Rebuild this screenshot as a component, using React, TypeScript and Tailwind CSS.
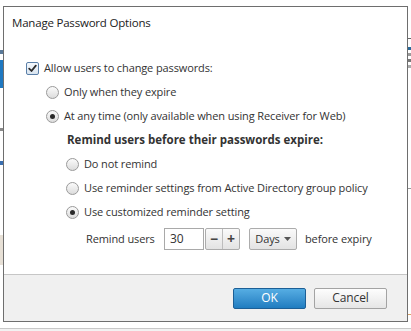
import React from 'react';

const font = { fontFamily: '"Open Sans", "Noto Sans", sans-serif' };

function CheckBox() {
  return (
    <span className="inline-flex h-[13px] w-[13px] shrink-0 items-center justify-center rounded-[2px] border border-[#5a7fa8] bg-gradient-to-b from-[#f4f8fc] to-[#d9e4ef]">
      <svg width="9" height="9" viewBox="0 0 9 9">
        <path d="M1.2 4.6 L3.5 7 L7.8 1.6" fill="none" stroke="#2b2b2b" strokeWidth="1.8" strokeLinecap="round" strokeLinejoin="round" />
      </svg>
    </span>
  );
}

function Radio({ checked }: { checked?: boolean }) {
  return (
    <span className="inline-flex h-[13px] w-[13px] shrink-0 items-center justify-center rounded-full border border-[#9a9a9a] bg-gradient-to-b from-[#fbfbfb] to-[#dcdcdc]">
      {checked && <span className="h-[5px] w-[5px] rounded-full bg-[#2a2a2a]" />}
    </span>
  );
}

function Option({ label, checked, indent }: { label: string; checked?: boolean; indent: string }) {
  return (
    <div className={`flex h-6 items-center gap-[5px] ${indent}`}>
      <Radio checked={checked} />
      <span>{label}</span>
    </div>
  );
}

export default function App() {
  return (
    <div className="flex h-[331px] w-[411px] flex-col overflow-hidden bg-white text-[11px] tracking-[-0.12px] text-[#333]" style={font}>
      <div className="flex flex-1">
        {/* page behind the dialog, left edge */}
        <div className="flex w-[3px] flex-col pt-[50px]">
          <div className="h-[4px] bg-[#5a7a9a]" />
          <div className="mt-[6px] h-[28px] bg-[#1f78c1]" />
          <div className="mt-[40px] h-[3px] bg-[#8a8a8a]" />
          <div className="mt-[30px] h-[4px] bg-[#3a6fb0]" />
          <div className="mt-[70px] h-[30px] bg-[#e7e0d6]" />
        </div>

        <div className="mt-[6px] flex h-[316px] w-[405px] flex-col border border-[#6e6e6e] bg-white">
          <div className="flex h-[32px] items-center pl-[8px] text-[11.5px] tracking-[-0.2px] text-[#222]">Manage Password Options</div>

          <div className="mt-[17px] flex flex-col pl-[22px]">
            <div className="flex h-6 items-center gap-[5px]">
              <CheckBox />
              <span>Allow users to change passwords:</span>
            </div>
            <Option indent="pl-[20px]" label="Only when they expire" />
            <Option indent="pl-[20px]" checked label="At any time (only available when using Receiver for Web)" />
            <div className="flex h-6 items-center pl-[41px] text-[11.5px] font-bold tracking-normal">Remind users before their passwords expire:</div>
            <Option indent="pl-[40px]" label="Do not remind" />
            <Option indent="pl-[40px]" label="Use reminder settings from Active Directory group policy" />
            <Option indent="pl-[40px]" checked label="Use customized reminder setting" />
            <div className="mt-[4px] flex h-[22px] items-center pl-[60px]">
              <span className="w-[78px] shrink-0">Remind users</span>
              <div className="flex h-[22px] w-[40px] items-center border border-[#a9a9a9] bg-white pl-[5px] text-[12px]">30</div>
              <div className="ml-[1px] flex h-[22px] w-[35px] rounded-[2px] border border-[#acacac] bg-gradient-to-b from-[#fafafa] to-[#e3e3e3] text-[14px] font-bold text-[#444]">
                <span className="flex flex-1 items-center justify-center border-r border-[#bdbdbd] leading-none">−</span>
                <span className="flex flex-1 items-center justify-center leading-none">+</span>
              </div>
              <div className="ml-[9px] flex h-[22px] w-[48px] items-center justify-center gap-[4px] rounded-[2px] border border-[#acacac] bg-gradient-to-b from-[#fafafa] to-[#e3e3e3]">
                <span>Days</span>
                <svg width="7" height="4" viewBox="0 0 7 4">
                  <path d="M0 0 H7 L3.5 4 Z" fill="#555" />
                </svg>
              </div>
              <span className="ml-[8px]">before expiry</span>
            </div>
          </div>

          <div className="mt-auto flex h-[47px] items-center justify-end gap-[8px] border-t border-[#c6c6c6] bg-[#f0f0f0] pr-[20px]">
            <button className="h-[21px] w-[73px] rounded-[2px] border border-[#1c5f96] bg-gradient-to-b from-[#56ade3] to-[#1f7dc0] text-[12px] text-white">OK</button>
            <button className="h-[21px] w-[73px] rounded-[2px] border border-[#a3a3a3] bg-gradient-to-b from-[#fdfdfd] to-[#e6e6e6] text-[12px] text-[#333]">Cancel</button>
          </div>
        </div>

        {/* page behind the dialog, right edge */}
        <div className="flex w-[3px] flex-col pt-[38px]">
          <div className="h-[1px] bg-[#666]" />
          <div className="mt-[8px] h-[3px] bg-[#2a6a9a]" />
          <div className="mt-[3px] h-[3px] bg-[#9a9a9a]" />
          <div className="mt-[3px] h-[3px] bg-[#777]" />
          <div className="mt-[3px] h-[3px] bg-[#aaa]" />
          <div className="mt-[120px] h-[1px] bg-[#999]" />
          <div className="mt-[125px] h-[1px] bg-[#d9a46a]" />
        </div>
      </div>
      <div className="h-[10px] bg-white">
        <div className="mt-[6px] h-[4px] border-t border-[#c8c8c8] bg-[#f2f2f2]" />
      </div>
    </div>
  );
}
